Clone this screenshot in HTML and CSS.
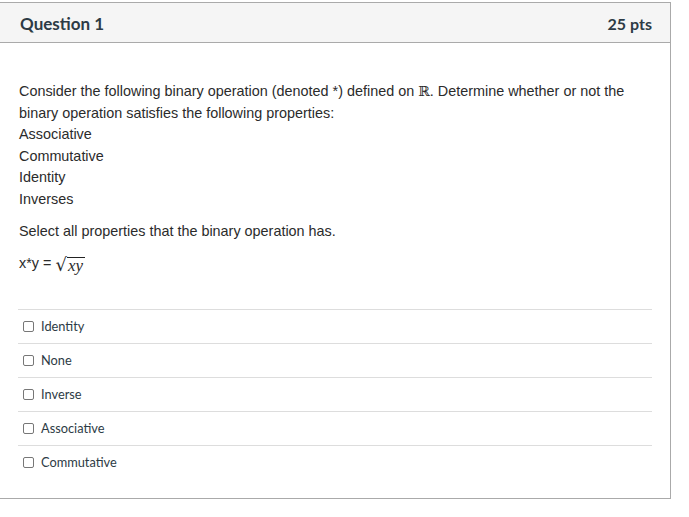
FILE: index.html
```html
<!DOCTYPE html>
<html>
<head>
<meta charset="utf-8">
<link rel="stylesheet" href="styles.css">
</head>
<body>
<div class="card">
  <div class="header">
    <span class="title">Question 1</span>
    <span class="pts">25 pts</span>
  </div>
  <div class="content">
    <div class="prompt">
      <p class="para">Consider the following binary operation (denoted *) defined on <span class="bbR">ℝ</span>. Determine whether or not the binary operation satisfies the following properties:<br>Associative<br>Commutative<br>Identity<br>Inverses</p>
      <p class="para">Select all properties that the binary operation has.</p>
      <p class="para formula">x*y = <span class="sqrt"><span class="radical">√</span><span class="radicand">xy</span></span></p>
    </div>
    <div class="answers">
      <label class="answer"><span class="box"></span><span class="atext">Identity</span></label>
      <label class="answer"><span class="box"></span><span class="atext">None</span></label>
      <label class="answer"><span class="box"></span><span class="atext">Inverse</span></label>
      <label class="answer"><span class="box"></span><span class="atext">Associative</span></label>
      <label class="answer"><span class="box"></span><span class="atext">Commutative</span></label>
    </div>
  </div>
</div>
</body>
</html>
```
FILE: styles.css
```css
html, body {
  margin: 0;
  padding: 0;
  background: #fff;
}
.card {
  margin: 2px 0 0 -1px;
  width: 672px;
  box-sizing: border-box;
  border: 1px solid #aaaaaa;
  background: #fff;
}
.header {
  height: 40px;
  box-sizing: border-box;
  background: #f5f5f5;
  border-bottom: 1px solid #aaaaaa;
  display: flex;
  align-items: center;
  justify-content: space-between;
  padding: 1px 18px 0 20px;
  font-family: Lato, "Liberation Sans", sans-serif;
  font-weight: 700;
  color: #2d3b45;
}
.title {
  font-size: 17px;
}
.pts {
  font-size: 16px;
}
.content {
  padding: 38px 18px 19px 19px;
}
.prompt {
  font-family: "Liberation Sans", Arial, sans-serif;
  font-size: 14.4px;
  line-height: 21.6px;
  color: #2b2b2b;
  padding-right: 14px;
}
.para {
  margin: 0 0 10.5px 0;
}
.bbR {
  font-family: "DejaVu Serif", serif;
  font-size: 14px;
}
.formula {
  margin-top: 10px;
  margin-bottom: 0;
}
.sqrt {
  display: inline-flex;
  align-items: flex-start;
  vertical-align: -3px;
}
.radical {
  font-family: "DejaVu Sans", sans-serif;
  font-size: 18px;
  line-height: 20px;
}
.radicand {
  font-family: "Liberation Serif", serif;
  font-style: italic;
  font-size: 17px;
  line-height: 16px;
  border-top: 1px solid #222;
  margin-top: 2px;
  padding: 0 2px 0 1px;
}
.answers {
  margin: 34px 0 0 -1px;
  font-family: Lato, "Liberation Sans", sans-serif;
  font-size: 12.8px;
  color: #2d3b45;
}
.answer {
  display: flex;
  align-items: center;
  height: 34px;
  box-sizing: border-box;
  border-top: 1px solid #dddddd;
  padding: 0 0 2px 5px;
}
.box {
  width: 9px;
  height: 9px;
  border: 1px solid #777;
  border-radius: 2px;
  margin-right: 7px;
  margin-top: 2px;
  background: #fff;
}
```
